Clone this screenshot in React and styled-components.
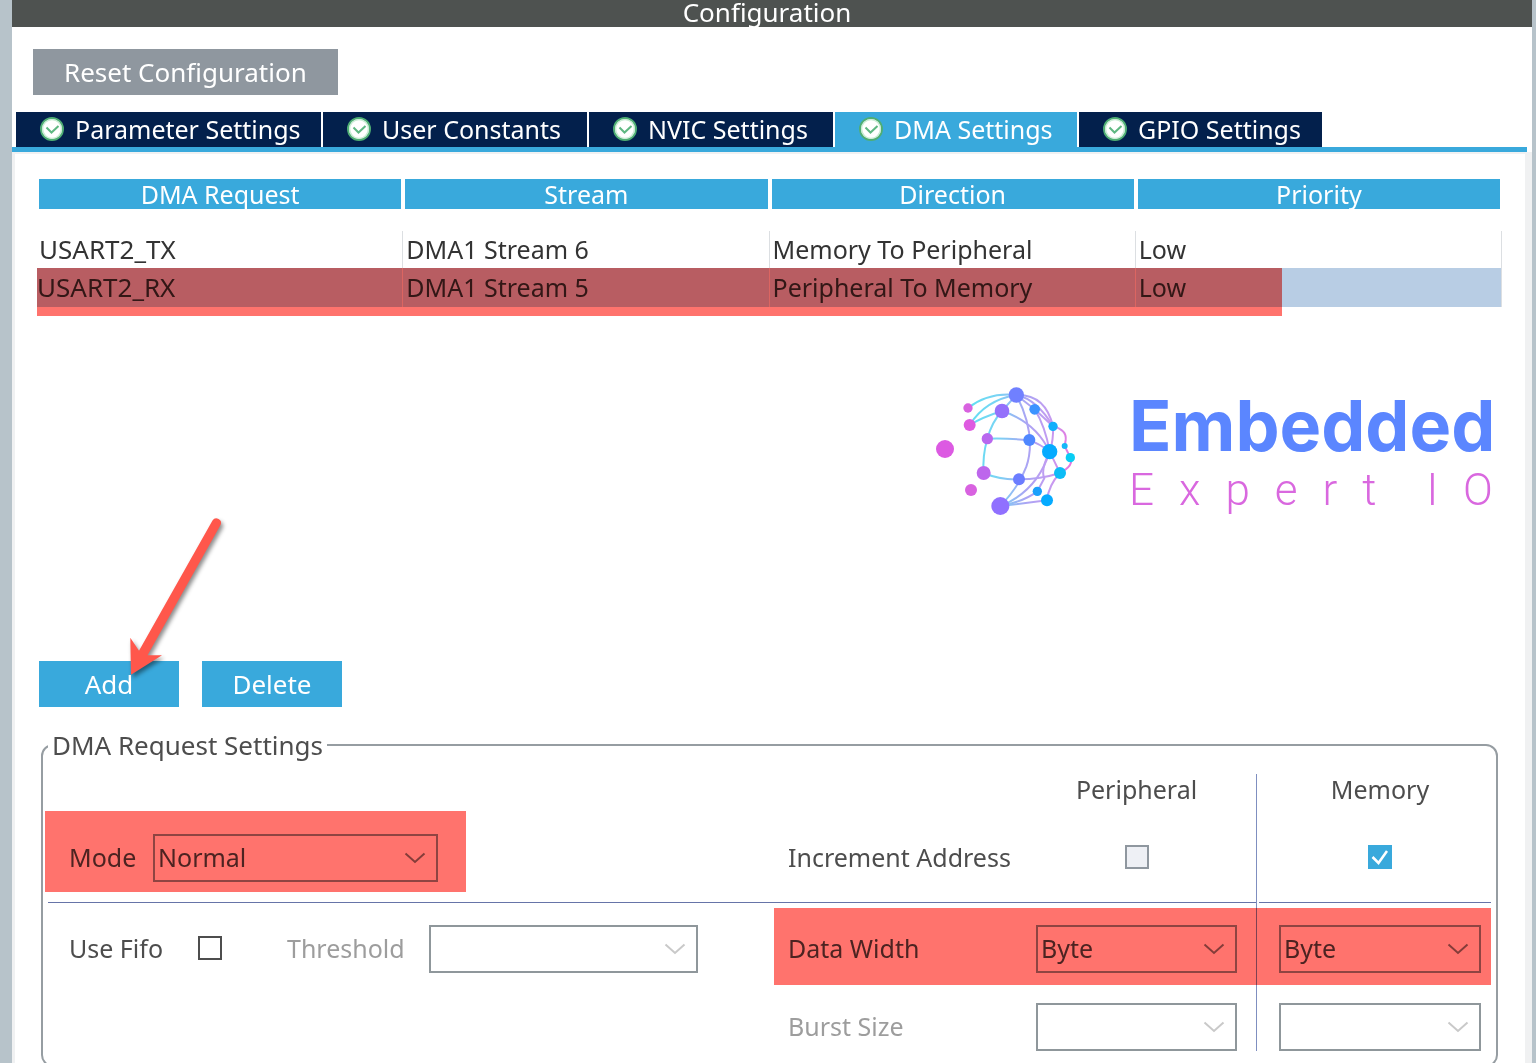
import React from "react";
import styled, { createGlobalStyle } from "styled-components";

const blue = "#39a9dc";
const navy = "#03204c";
const highlight = "#ff736d";

const GlobalStyle = createGlobalStyle`
  *, *::before, *::after { box-sizing: border-box; }
  body {
    margin: 0;
    background: #b7c3ca;
    font-family: "Noto Sans", "Open Sans", sans-serif;
    font-size: 25px;
    line-height: 32px;
    color: #4d4d4d;
  }
  button, select, input { font: inherit; color: inherit; margin: 0; }
`;

const Frame = styled.main`
  height: 100vh;
  overflow: hidden;
  margin: 0 4px 0 12px;
  background: #fff;
`;

const TitleBar = styled.h1`
  margin: 0;
  height: 27px;
  line-height: 24px;
  font-size: 26px;
  font-weight: 400;
  text-align: center;
  color: #fff;
  background: #4e5250;
  padding-right: 10px;
`;

const Toolbar = styled.div`
  padding: 22px 21px 17px;
`;

const Button = styled.button`
  min-width: 140px;
  height: 46px;
  padding: 0 ${(p) => (p.$muted ? 31 : 20)}px;
  border: 0;
  font-size: 26px;
  color: #fff;
  background: ${(p) => (p.$muted ? "#8f979f" : blue)};
`;

const TabList = styled.div`
  display: flex;
  gap: 2px;
  padding-left: 4px;
  margin-right: 5px;
  border-bottom: 5px solid ${blue};
`;

const Tab = styled.button`
  display: flex;
  align-items: center;
  gap: 11px;
  min-width: ${(p) => p.$w}px;
  height: 35px;
  padding: 0 18px 2px 24px;
  border: 0;
  white-space: nowrap;
  color: #fff;
  background: ${(p) => (p.$active ? blue : navy)};
`;

const Panel = styled.section`
  border: solid #f0f1f2;
  border-width: 2px 7px 0 3px;
  padding: 25px 23px 0 22px;
`;

const RequestArea = styled.div`
  position: relative;
  min-height: 482px;
`;

const Table = styled.table`
  width: 100%;
  table-layout: fixed;
  border-collapse: separate;
  border-spacing: 0;
`;

const HeadCell = styled.th`
  height: 52px;
  padding: 0;
  border: solid transparent;
  border-width: 0 2px 22px;
  background: ${blue};
  background-clip: padding-box;
  color: #fff;
  font-weight: 400;
  line-height: 30px;
`;

const Row = styled.tr`
  color: #333;
  background: ${(p) => (p.$selected ? "#b8cde4" : "transparent")};
`;

const Cell = styled.td`
  height: ${(p) => (p.$selected ? 39 : 37)}px;
  padding: 0 0 2px 3px;
  border-right: 1px solid #dcdfe2;
  line-height: 34px;
  &:first-child {
    padding-left: ${(p) => (p.$selected ? 0 : 2)}px;
    font-size: 26px;
  }
`;

const RowHighlight = styled.div`
  position: absolute;
  top: 89px;
  left: 0;
  width: 85%;
  height: 48px;
  background: ${highlight};
  mix-blend-mode: multiply;
  pointer-events: none;
`;

const Brand = styled.div`
  display: flex;
  justify-content: flex-end;
  gap: 50px;
  margin-top: 77px;
  padding-right: 9px;
`;

const BrandText = styled.div`
  width: 364px;
  white-space: nowrap;
`;

const BrandName = styled.div`
  font-family: Inter, sans-serif;
  font-weight: 700;
  font-size: 70px;
  line-height: 84px;
  color: #5b86ff;
`;

const BrandSub = styled.div`
  display: flex;
  justify-content: space-between;
  font-family: Roboto, sans-serif;
  font-weight: 300;
  font-size: 44px;
  line-height: 44px;
  color: #d968df;
`;

const Pointer = styled.svg`
  position: absolute;
  left: 86px;
  top: 332px;
  width: 110px;
  height: 174px;
  overflow: visible;
  pointer-events: none;
  filter: drop-shadow(2px 3px 2px rgba(0, 0, 0, 0.45));
`;

const Actions = styled.div`
  display: flex;
  gap: 23px;
  padding-left: 2px;
`;

const Settings = styled.fieldset`
  margin: 20px 4px 0;
  padding: 11px 5px 14px;
  border: 2px solid #969da2;
  border-radius: 12px;
  min-width: 0;
`;

const Legend = styled.legend`
  padding: 0 4px;
  font-size: 26px;
  line-height: 36px;
`;

const Grid = styled.div`
  display: grid;
  grid-template-columns: 726fr 241fr 242fr 234fr;
  grid-template-rows: 37px 92px 82px 66px;
`;

const Area = styled.div`
  grid-column: ${(p) => p.$col};
  grid-row: ${(p) => p.$row};
  display: flex;
  align-items: center;
  height: ${(p) => (p.$row === 1 ? 32 : 48)}px;
  margin-top: ${(p) => [0, 0, 23, 22, 18][p.$row]}px;
  padding: ${(p) => ["0", "0 0 0 21px", "0 0 0 14px", "0 20px 0 21px", "0 10px 0 22px"][p.$col]};
  justify-content: ${(p) => (p.$col > 2 ? "center" : "flex-start")};
`;

const HorizontalRule = styled.div`
  grid-row: 2;
  grid-column: ${(p) => p.$col};
  margin-left: ${(p) => p.$inset || 0}px;
  border-bottom: 1px solid #6674a8;
`;

const VerticalRule = styled.div`
  grid-row: 1 / 5;
  grid-column: 3;
  border-right: 1px solid #7f8fc0;
`;

const ModeHighlight = styled.div`
  grid-area: 2 / 1;
  width: 58%;
  height: 81px;
  margin-left: -3px;
  background: ${highlight};
  mix-blend-mode: multiply;
  pointer-events: none;
`;

const WidthHighlight = styled.div`
  grid-area: 3 / 2 / 4 / 5;
  margin-top: 5px;
  background: ${highlight};
  mix-blend-mode: multiply;
  pointer-events: none;
`;

const Label = styled.label`
  width: ${(p) => (p.$w ? p.$w + "px" : "auto")};
  padding-bottom: 2px;
  white-space: nowrap;
  color: ${(p) => (p.$disabled ? "#9d9d9d" : "#4d4d4d")};
`;

const SelectBox = styled.span`
  position: relative;
  display: block;
  width: ${(p) => (p.$w ? p.$w + "px" : "100%")};
  height: 48px;
  svg {
    position: absolute;
    right: 12px;
    top: 18px;
    pointer-events: none;
  }
`;

const NativeSelect = styled.select`
  display: block;
  appearance: none;
  width: 100%;
  height: 48px;
  padding: 0 36px 2px 3px;
  border: 2px solid #8f979b;
  border-radius: 0;
  background: #fff;
  opacity: 1;
`;

const CheckWrap = styled.span`
  position: relative;
  display: block;
  width: 24px;
  height: 24px;
  margin: 0 ${(p) => p.$after || 0}px 2px 0;
  svg { position: absolute; inset: 0; pointer-events: none; }
`;

const Check = styled.input`
  display: block;
  appearance: none;
  width: 24px;
  height: 24px;
  border: 2px solid #4d4d4d;
  background: #fff;
  &:disabled { border-color: #8f979f; background: #eef0f5; }
  &:checked { border-color: ${blue}; background: ${blue}; }
`;

function StatusIcon() {
  return (
    <svg width="24" height="24" viewBox="0 0 24 24" aria-hidden="true">
      <circle cx="12" cy="12" r="11" fill="#fff" stroke="#4fae74" strokeWidth="2" />
      <circle cx="12" cy="12" r="9.4" fill="none" stroke="#c9ecd4" strokeWidth="1.4" />
      <path d="M6.5 10.5l5 5 7-6.5" fill="none" stroke="#5fb882" strokeWidth="2" />
    </svg>
  );
}

function Select({ id, value, width, disabled, label }) {
  return (
    <SelectBox $w={width}>
      <NativeSelect id={id} aria-label={label} disabled={disabled} defaultValue={value}>
        <option>{value}</option>
      </NativeSelect>
      <svg width="22" height="12" viewBox="0 0 22 12" aria-hidden="true">
        <path d="M1.5 1.5L11 10l9.500-8.500" fill="none" stroke={disabled ? "#c9c9c9" : "#858585"} strokeWidth="2" />
      </svg>
    </SelectBox>
  );
}

const nodes = [
  [288, 75, 23, "#7080ff"], [245, 123, 22, "#9470fb"], [343, 118, 16, "#3c93ff"],
  [143, 114, 14, "#d862df"], [148, 165, 18, "#de5be0"], [201, 206, 17, "#b868ee"],
  [327, 210, 18, "#4f87ff"], [398, 169, 14, "#12aefc"], [388, 245, 23, "#06abff"],
  [433, 228, 9, "#14b7f8"], [450, 263, 14, "#08cdf4"], [419, 309, 18, "#0cbcf6"],
  [74, 237, 27, "#dc5ae2"], [190, 309, 21, "#bd66ec"], [296, 328, 18, "#6c7dff"],
  [152, 360, 18, "#d862e0"], [240, 408, 27, "#9070ff"], [351, 364, 14, "#1aa0fb"],
  [380, 391, 18, "#06abff"],
];

function Globe() {
  return (
    <svg width="144" height="134" viewBox="44 42 432 402" aria-hidden="true">
      <defs>
        <linearGradient id="strand" x1="140" x2="460" y1="0" y2="0" gradientUnits="userSpaceOnUse">
          <stop offset="0" stopColor="#5fe0f2" />
          <stop offset="0.3" stopColor="#7bd3f4" />
          <stop offset="0.55" stopColor="#a9a5f4" />
          <stop offset="0.8" stopColor="#c79af0" />
          <stop offset="1" stopColor="#ec6fdc" />
        </linearGradient>
      </defs>
      <g fill="none" stroke="url(#strand)" strokeWidth="6">
        <path d="M143 114Q205 66 288 75" />
        <path d="M148 165Q195 90 288 75" />
        <path d="M148 165Q185 142 245 123L288 75" />
        <path d="M245 123Q215 155 201 206Q186 258 190 309" />
        <path d="M201 206Q265 204 327 211Q360 222 388 245" />
        <path d="M190 309Q240 330 296 328Q360 328 419 309" />
        <path d="M288 75Q350 195 318 290Q296 350 240 408" />
        <path d="M245 123Q345 155 388 245" />
        <path d="M288 75L343 118Q375 170 388 245" />
        <path d="M288 75Q375 72 398 169Q400 210 388 245" />
        <path d="M288 75Q350 88 398 169" />
        <path d="M343 118L398 169Q440 180 436 210L433 228L450 263Q462 285 419 309" />
        <path d="M388 245L419 309Q385 345 380 391" />
        <path d="M388 245Q350 365 240 408" />
        <path d="M388 245Q360 300 372 325L351 364Q310 395 240 408" />
        <path d="M240 408Q310 400 380 391" />
      </g>
      {nodes.map(([x, y, r, fill]) => (
        <circle key={`${x}-${y}`} cx={x} cy={y} r={r} fill={fill} />
      ))}
    </svg>
  );
}

const tabs = [
  ["Parameter Settings", 305],
  ["User Constants", 264],
  ["NVIC Settings", 244],
  ["DMA Settings", 242],
  ["GPIO Settings", 243],
];
const columns = ["DMA Request", "Stream", "Direction", "Priority"];
const requests = [
  ["USART2_TX", "DMA1 Stream 6", "Memory To Peripheral", "Low"],
  ["USART2_RX", "DMA1 Stream 5", "Peripheral To Memory", "Low"],
];

export default function App() {
  return (
    <>
      <GlobalStyle />
      <Frame>
        <TitleBar>Configuration</TitleBar>
        <Toolbar>
          <Button $muted>Reset Configuration</Button>
        </Toolbar>
        <TabList role="tablist">
          {tabs.map(([name, width]) => (
            <Tab key={name} role="tab" $w={width} aria-selected={name === "DMA Settings"} $active={name === "DMA Settings"}>
              <StatusIcon />
              {name}
            </Tab>
          ))}
        </TabList>
        <Panel>
          <RequestArea>
            <Table>
              <thead>
                <tr>{columns.map((c) => <HeadCell key={c} scope="col">{c}</HeadCell>)}</tr>
              </thead>
              <tbody>
                {requests.map((cells, i) => (
                  <Row key={cells[0]} $selected={i === 1}>
                    {cells.map((c) => <Cell key={c} $selected={i === 1}>{c}</Cell>)}
                  </Row>
                ))}
              </tbody>
            </Table>
            <RowHighlight />
            <Brand>
              <Globe />
              <BrandText>
                <BrandName>Embedded</BrandName>
                <BrandSub aria-label="Expert IO">
                  {"Expert IO".split("").map((ch, i) => <span key={i}>{ch}</span>)}
                </BrandSub>
              </BrandText>
            </Brand>
            <Pointer viewBox="0 0 110 174" aria-hidden="true">
              <path
                d="M89.500 9.500a4.600 4.600 0 0 1 8 4.500L24.500 144.300H39L8 163.700L7.300 126.700L16 139.700Z"
                fill="#ff574b"
              />
            </Pointer>
          </RequestArea>
          <Actions>
            <Button>Add</Button>
            <Button>Delete</Button>
          </Actions>
          <Settings>
            <Legend>DMA Request Settings</Legend>
            <Grid>
              <Area $row={1} $col={3}><Label as="span">Peripheral</Label></Area>
              <Area $row={1} $col={4}><Label as="span">Memory</Label></Area>

              <Area $row={2} $col={1}>
                <Label htmlFor="mode" $w={84}>Mode</Label>
                <Select id="mode" value="Normal" width={285} />
              </Area>
              <Area $row={2} $col={2}><Label htmlFor="increment-p">Increment Address</Label></Area>
              <Area $row={2} $col={3}>
                <CheckWrap><Check id="increment-p" type="checkbox" disabled /></CheckWrap>
              </Area>
              <Area $row={2} $col={4}>
                <CheckWrap>
                  <Check type="checkbox" defaultChecked aria-label="Increment memory address" />
                  <svg width="24" height="24" viewBox="0 0 24 24" aria-hidden="true">
                    <path d="M4.500 12l6 6L19 6" fill="none" stroke="#fff" strokeWidth="2.500" />
                  </svg>
                </CheckWrap>
              </Area>
              <HorizontalRule $col="1 / 4" />
              <HorizontalRule $col="4" $inset={2} />

              <Area $row={3} $col={1}>
                <Label htmlFor="fifo" $w={129}>Use Fifo</Label>
                <CheckWrap $after={65}><Check id="fifo" type="checkbox" /></CheckWrap>
                <Label htmlFor="threshold" $w={142} $disabled>Threshold</Label>
                <Select id="threshold" value="" width={269} disabled />
              </Area>
              <Area $row={3} $col={2}><Label htmlFor="width-p">Data Width</Label></Area>
              <Area $row={3} $col={3}><Select id="width-p" value="Byte" /></Area>
              <Area $row={3} $col={4}><Select label="Memory data width" value="Byte" /></Area>

              <Area $row={4} $col={2}><Label htmlFor="burst-p" $disabled>Burst Size</Label></Area>
              <Area $row={4} $col={3}><Select id="burst-p" value="" disabled /></Area>
              <Area $row={4} $col={4}><Select label="Memory burst size" value="" disabled /></Area>
              <VerticalRule />
              <ModeHighlight />
              <WidthHighlight />
            </Grid>
          </Settings>
        </Panel>
      </Frame>
    </>
  );
}
